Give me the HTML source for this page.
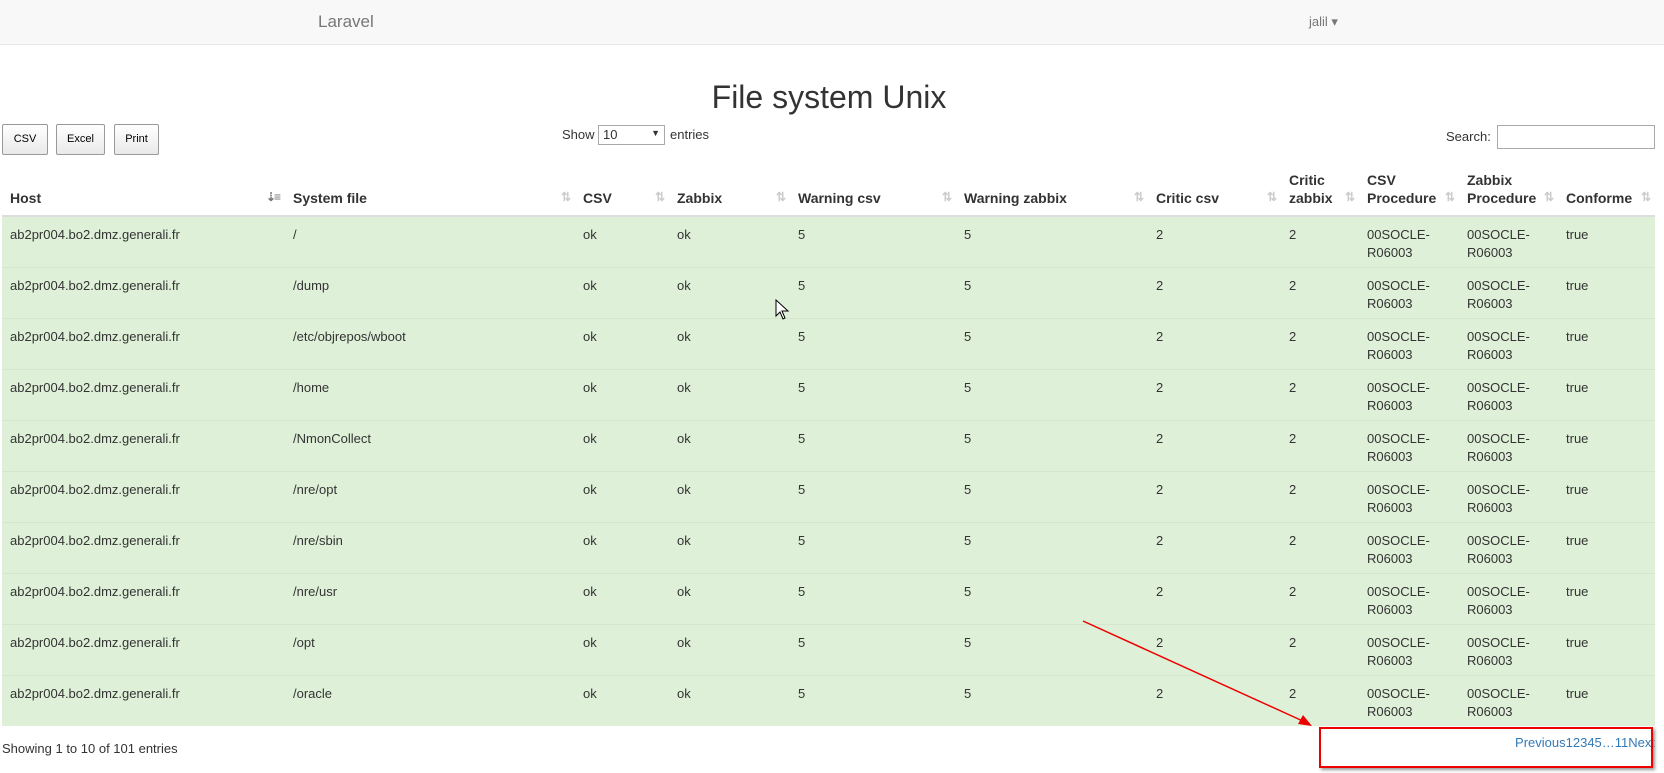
<!DOCTYPE html>
<html><head><meta charset="utf-8"><style>
*{box-sizing:border-box;margin:0;padding:0}
body{width:1664px;height:773px;overflow:hidden;background:#fff;font-family:"Liberation Sans",sans-serif;font-size:14px;color:#333;position:relative}
.nav{position:absolute;left:0;top:0;width:1664px;height:45px;background:#f8f8f8;border-bottom:1px solid #e7e7e7}
.nav .b{position:absolute;left:318px;top:12px;font-size:17px;color:#777}
.nav .u{position:absolute;left:1309px;top:14px;font-size:13px;color:#777}
h1{position:absolute;left:0;width:1658px;text-align:center;top:79px;font-size:32px;font-weight:normal;color:#333}
.btn{position:absolute;top:124px;height:31px;border:1px solid #999;border-radius:2px;background:linear-gradient(#fff,#e9e9e9);font-size:11px;text-align:center;line-height:29px;color:#000}
.abs{position:absolute}
table{position:absolute;left:2px;top:168px;width:1653px;border-collapse:collapse}
th{text-align:left;font-weight:bold;vertical-align:bottom;padding:0 8px 8px;height:48px;border-bottom:2px solid #ddd;position:relative;line-height:18px}
th i{position:absolute;right:6px;bottom:9px;color:#ccc;font-style:normal;font-size:12px;letter-spacing:-2px}
td{background:#dff0d8;vertical-align:top;padding:9px 8px 0;height:51px;border-top:1px solid #d6e6ce;line-height:18px;font-size:13px}
.pg{position:absolute;right:9px;top:735px;color:#337ab7;font-size:13px}
</style></head><body>
<div class="nav"><span class="b">Laravel</span><span class="u">jalil ▾</span></div>
<h1>File system Unix</h1>
<div class="btn" style="left:2px;width:46px">CSV</div>
<div class="btn" style="left:56px;width:49px">Excel</div>
<div class="btn" style="left:114px;width:45px">Print</div>
<div class="abs" style="left:562px;top:127px;font-size:13px">Show</div>
<div class="abs" style="left:598px;top:125px;width:67px;height:20px;border:1px solid #aaa;font-size:13px;padding:1px 4px">10<span style="position:absolute;right:4px;top:2px;font-size:9px">▼</span></div>
<div class="abs" style="left:670px;top:127px;font-size:13px">entries</div>
<div class="abs" style="left:1446px;top:129px;font-size:13px">Search:</div>
<div class="abs" style="left:1497px;top:125px;width:158px;height:24px;border:1px solid #aaa"></div>
<table>
<colgroup><col style="width:283px"><col style="width:290px"><col style="width:94px"><col style="width:121px"><col style="width:166px"><col style="width:192px"><col style="width:133px"><col style="width:78px"><col style="width:100px"><col style="width:99px"><col style="width:97px"></colgroup>
<tr><th>Host<i style="color:#777">⇣≡</i></th><th>System file<i>⇅</i></th><th>CSV<i>⇅</i></th><th>Zabbix<i>⇅</i></th><th>Warning csv<i>⇅</i></th><th>Warning zabbix<i>⇅</i></th><th>Critic csv<i>⇅</i></th><th>Critic<br>zabbix<i>⇅</i></th><th>CSV<br>Procedure<i>⇅</i></th><th>Zabbix<br>Procedure<i>⇅</i></th><th>Conforme<i>⇅</i></th></tr>
<tr><td>ab2pr004.bo2.dmz.generali.fr</td><td>/</td><td>ok</td><td>ok</td><td>5</td><td>5</td><td>2</td><td>2</td><td>00SOCLE-<br>R06003</td><td>00SOCLE-<br>R06003</td><td>true</td></tr>
<tr><td>ab2pr004.bo2.dmz.generali.fr</td><td>/dump</td><td>ok</td><td>ok</td><td>5</td><td>5</td><td>2</td><td>2</td><td>00SOCLE-<br>R06003</td><td>00SOCLE-<br>R06003</td><td>true</td></tr>
<tr><td>ab2pr004.bo2.dmz.generali.fr</td><td>/etc/objrepos/wboot</td><td>ok</td><td>ok</td><td>5</td><td>5</td><td>2</td><td>2</td><td>00SOCLE-<br>R06003</td><td>00SOCLE-<br>R06003</td><td>true</td></tr>
<tr><td>ab2pr004.bo2.dmz.generali.fr</td><td>/home</td><td>ok</td><td>ok</td><td>5</td><td>5</td><td>2</td><td>2</td><td>00SOCLE-<br>R06003</td><td>00SOCLE-<br>R06003</td><td>true</td></tr>
<tr><td>ab2pr004.bo2.dmz.generali.fr</td><td>/NmonCollect</td><td>ok</td><td>ok</td><td>5</td><td>5</td><td>2</td><td>2</td><td>00SOCLE-<br>R06003</td><td>00SOCLE-<br>R06003</td><td>true</td></tr>
<tr><td>ab2pr004.bo2.dmz.generali.fr</td><td>/nre/opt</td><td>ok</td><td>ok</td><td>5</td><td>5</td><td>2</td><td>2</td><td>00SOCLE-<br>R06003</td><td>00SOCLE-<br>R06003</td><td>true</td></tr>
<tr><td>ab2pr004.bo2.dmz.generali.fr</td><td>/nre/sbin</td><td>ok</td><td>ok</td><td>5</td><td>5</td><td>2</td><td>2</td><td>00SOCLE-<br>R06003</td><td>00SOCLE-<br>R06003</td><td>true</td></tr>
<tr><td>ab2pr004.bo2.dmz.generali.fr</td><td>/nre/usr</td><td>ok</td><td>ok</td><td>5</td><td>5</td><td>2</td><td>2</td><td>00SOCLE-<br>R06003</td><td>00SOCLE-<br>R06003</td><td>true</td></tr>
<tr><td>ab2pr004.bo2.dmz.generali.fr</td><td>/opt</td><td>ok</td><td>ok</td><td>5</td><td>5</td><td>2</td><td>2</td><td>00SOCLE-<br>R06003</td><td>00SOCLE-<br>R06003</td><td>true</td></tr>
<tr><td>ab2pr004.bo2.dmz.generali.fr</td><td>/oracle</td><td>ok</td><td>ok</td><td>5</td><td>5</td><td>2</td><td>2</td><td>00SOCLE-<br>R06003</td><td>00SOCLE-<br>R06003</td><td>true</td></tr>
</table>
<div class="abs" style="left:2px;top:741px;font-size:13px">Showing 1 to 10 of 101 entries</div>
<div class="pg">Previous12345…11Next</div>
<div class="abs" style="left:1319px;top:727px;width:334px;height:41px;border:2px solid #e00;box-shadow:2px 2px 3px #999"></div>
<svg class="abs" style="left:0;top:0" width="1664" height="773"><line x1="1083" y1="621" x2="1305" y2="722" stroke="#e00" stroke-width="1.5"/><polygon points="1312,726 1298,724 1303,715" fill="#e00"/>
<path d="M776 300 L776 316 L780 312 L783 319 L785 318 L782 311 L788 311 Z" fill="#fff" stroke="#000" stroke-width="1"/></svg>
</body></html>
